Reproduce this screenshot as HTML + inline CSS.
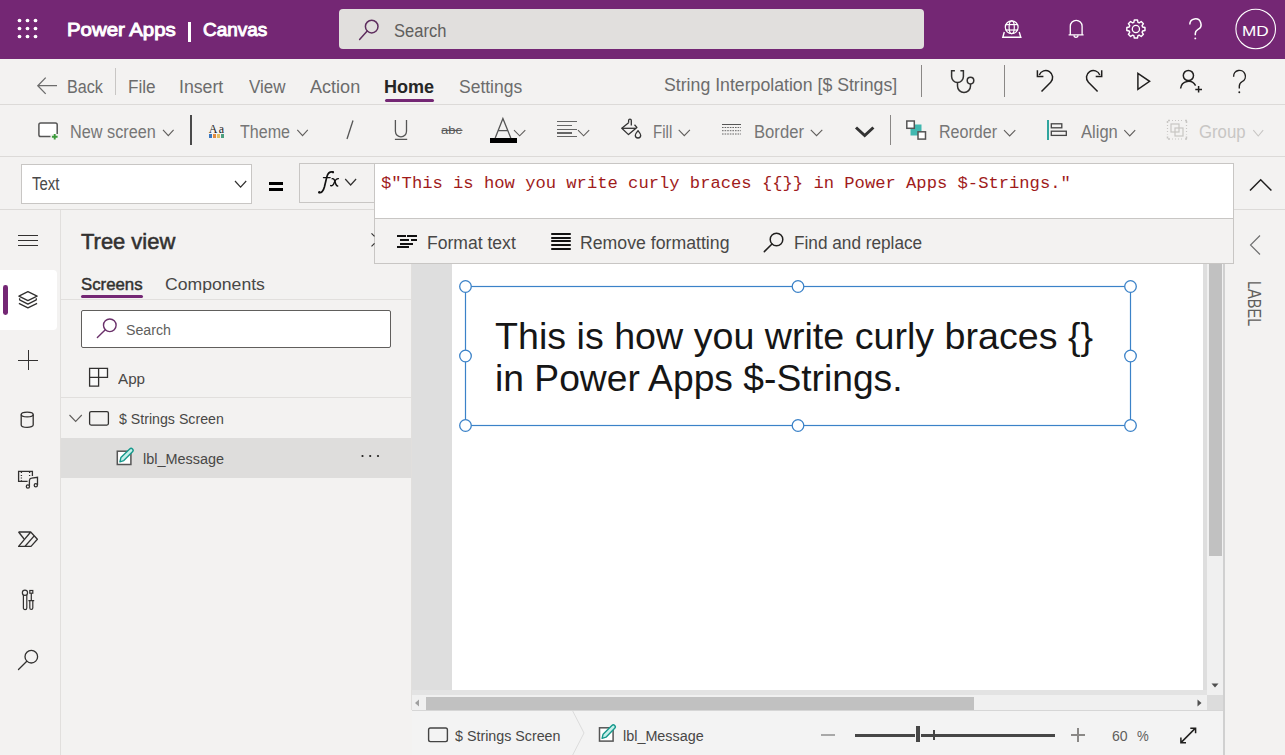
<!DOCTYPE html>
<html><head><meta charset="utf-8"><title>Power Apps</title>
<style>
html,body{margin:0;padding:0;width:1285px;height:755px;overflow:hidden;background:#f3f2f1;font-family:'Liberation Sans', sans-serif;}
</style></head><body>
<div style="position:relative;width:1285px;height:755px;overflow:hidden">
<div style="position:absolute;left:0px;top:0px;width:1285px;height:755px;background:#f3f2f1"></div>
<div style="position:absolute;left:0px;top:0px;width:1285px;height:59px;background:#742774"></div>
<div style="position:absolute;left:0px;top:104px;width:1285px;height:1px;background:#dcdad8"></div>
<div style="position:absolute;left:0px;top:156px;width:1285px;height:1px;background:#dcdad8"></div>
<div style="position:absolute;left:0px;top:209px;width:1285px;height:1px;background:#dcdad8"></div>
<div style="position:absolute;left:66.93px;top:21.00px;font-size:18.8px;line-height:18.8px;color:#fff;font-weight:normal;font-family:'Liberation Sans', sans-serif;white-space:pre;transform:scaleX(1.0846);transform-origin:0 0;-webkit-text-stroke:0.95px #fff">Power Apps</div>
<div style="position:absolute;left:188.4px;top:21.8px;width:2.4px;height:20.2px;background:#fff"></div>
<div style="position:absolute;left:202.73px;top:21.00px;font-size:18.8px;line-height:18.8px;color:#fff;font-weight:normal;font-family:'Liberation Sans', sans-serif;white-space:pre;transform:scaleX(1.0078);transform-origin:0 0;-webkit-text-stroke:0.95px #fff">Canvas</div>
<div style="position:absolute;left:339px;top:9px;width:585px;height:40px;background:#e1dfdd;border-radius:4px"></div>
<div style="position:absolute;left:393.76px;top:22.00px;font-size:18px;line-height:18px;color:#605e5c;font-weight:normal;font-family:'Liberation Sans', sans-serif;white-space:pre;transform:scaleX(0.9174);transform-origin:0 0;">Search</div>
<div style="position:absolute;left:1242.29px;top:23.00px;font-size:15.5px;line-height:15.5px;color:#fff;font-weight:normal;font-family:'Liberation Sans', sans-serif;white-space:pre;transform:scaleX(1.1092);transform-origin:0 0;">MD</div>
<div style="position:absolute;left:66.68px;top:79.00px;font-size:17.5px;line-height:17.5px;color:#6c6c6c;font-weight:normal;font-family:'Liberation Sans', sans-serif;white-space:pre;transform:scaleX(0.9230);transform-origin:0 0;">Back</div>
<div style="position:absolute;left:115px;top:68px;width:1px;height:27px;background:#c8c6c4"></div>
<div style="position:absolute;left:127.59px;top:79.00px;font-size:17.5px;line-height:17.5px;color:#6c6c6c;font-weight:normal;font-family:'Liberation Sans', sans-serif;white-space:pre;transform:scaleX(0.9812);transform-origin:0 0;">File</div>
<div style="position:absolute;left:178.87px;top:79.00px;font-size:17.5px;line-height:17.5px;color:#6c6c6c;font-weight:normal;font-family:'Liberation Sans', sans-serif;white-space:pre;transform:scaleX(1.0111);transform-origin:0 0;">Insert</div>
<div style="position:absolute;left:248.53px;top:79.00px;font-size:17.5px;line-height:17.5px;color:#6c6c6c;font-weight:normal;font-family:'Liberation Sans', sans-serif;white-space:pre;transform:scaleX(0.9683);transform-origin:0 0;">View</div>
<div style="position:absolute;left:310.46px;top:79.00px;font-size:17.5px;line-height:17.5px;color:#6c6c6c;font-weight:normal;font-family:'Liberation Sans', sans-serif;white-space:pre;transform:scaleX(1.0324);transform-origin:0 0;">Action</div>
<div style="position:absolute;left:384.29px;top:79.00px;font-size:17.5px;line-height:17.5px;color:#262626;font-weight:bold;font-family:'Liberation Sans', sans-serif;white-space:pre;transform:scaleX(1.0310);transform-origin:0 0;">Home</div>
<div style="position:absolute;left:385px;top:99px;width:49px;height:3px;background:#742774;border-radius:1.5px"></div>
<div style="position:absolute;left:458.71px;top:79.00px;font-size:17.5px;line-height:17.5px;color:#6c6c6c;font-weight:normal;font-family:'Liberation Sans', sans-serif;white-space:pre;transform:scaleX(0.9998);transform-origin:0 0;">Settings</div>
<div style="position:absolute;left:663.80px;top:77.00px;font-size:17.5px;line-height:17.5px;color:#6c6c6c;font-weight:normal;font-family:'Liberation Sans', sans-serif;white-space:pre;transform:scaleX(1.0113);transform-origin:0 0;">String Interpolation [$ Strings]</div>
<div style="position:absolute;left:921px;top:65px;width:1px;height:32px;background:#8a8886"></div>
<div style="position:absolute;left:1004px;top:65px;width:1px;height:32px;background:#8a8886"></div>
<div style="position:absolute;left:70.27px;top:124.00px;font-size:17.5px;line-height:17.5px;color:#767676;font-weight:normal;font-family:'Liberation Sans', sans-serif;white-space:pre;transform:scaleX(0.9284);transform-origin:0 0;">New screen</div>
<div style="position:absolute;left:190px;top:115px;width:2px;height:30px;background:#4a4a4a"></div>
<div style="position:absolute;left:208.80px;top:123.00px;font-size:12px;line-height:12px;color:#222;font-weight:normal;font-family:'Liberation Serif', serif;white-space:pre;letter-spacing:1.2px">Aa</div>
<div style="position:absolute;left:208.6px;top:134.3px;width:3.4px;height:3.3px;background:#3a78c0"></div>
<div style="position:absolute;left:212.7px;top:134.3px;width:3.4px;height:3.3px;background:#e08a40"></div>
<div style="position:absolute;left:216.79999999999998px;top:134.3px;width:3.4px;height:3.3px;background:#e3bd62"></div>
<div style="position:absolute;left:220.9px;top:134.3px;width:3.4px;height:3.3px;background:#4b9f7f"></div>
<div style="position:absolute;left:239.65px;top:124.00px;font-size:17.5px;line-height:17.5px;color:#767676;font-weight:normal;font-family:'Liberation Sans', sans-serif;white-space:pre;transform:scaleX(0.9192);transform-origin:0 0;">Theme</div>
<div style="position:absolute;left:441.46px;top:125.00px;font-size:11.5px;line-height:11.5px;color:#555;font-weight:normal;font-family:'Liberation Sans', sans-serif;white-space:pre;transform:scaleX(1.1264);transform-origin:0 0;">abc</div>
<div style="position:absolute;left:490px;top:138px;width:27px;height:5px;background:#000"></div>
<div style="position:absolute;left:557px;top:121.3px;width:20px;height:1.1px;background:#666"></div>
<div style="position:absolute;left:557px;top:125.02px;width:15px;height:1.1px;background:#666"></div>
<div style="position:absolute;left:557px;top:128.74px;width:20px;height:1.1px;background:#666"></div>
<div style="position:absolute;left:557px;top:132.46px;width:15px;height:1.1px;background:#666"></div>
<div style="position:absolute;left:557px;top:136.18px;width:20px;height:1.1px;background:#666"></div>
<div style="position:absolute;left:652.96px;top:124.00px;font-size:17.5px;line-height:17.5px;color:#767676;font-weight:normal;font-family:'Liberation Sans', sans-serif;white-space:pre;transform:scaleX(0.8612);transform-origin:0 0;">Fill</div>
<div style="position:absolute;left:722px;top:124px;width:19px;height:1.3px;background:#555"></div>
<div style="position:absolute;left:753.94px;top:124.00px;font-size:17.5px;line-height:17.5px;color:#767676;font-weight:normal;font-family:'Liberation Sans', sans-serif;white-space:pre;transform:scaleX(0.9507);transform-origin:0 0;">Border</div>
<div style="position:absolute;left:890px;top:115px;width:1px;height:30px;background:#8a8886"></div>
<div style="position:absolute;left:938.78px;top:124.00px;font-size:17.5px;line-height:17.5px;color:#767676;font-weight:normal;font-family:'Liberation Sans', sans-serif;white-space:pre;transform:scaleX(0.9185);transform-origin:0 0;">Reorder</div>
<div style="position:absolute;left:1047px;top:120px;width:1.6px;height:20px;background:#2fa59e"></div>
<div style="position:absolute;left:1080.57px;top:124.00px;font-size:17.5px;line-height:17.5px;color:#767676;font-weight:normal;font-family:'Liberation Sans', sans-serif;white-space:pre;transform:scaleX(0.9458);transform-origin:0 0;">Align</div>
<div style="position:absolute;left:1199.46px;top:124.00px;font-size:17.5px;line-height:17.5px;color:#c8c6c4;font-weight:normal;font-family:'Liberation Sans', sans-serif;white-space:pre;transform:scaleX(0.9570);transform-origin:0 0;">Group</div>
<div style="position:absolute;left:21px;top:164px;width:230.5px;height:40px;background:#fff;border:1px solid #c8c6c4;box-sizing:border-box"></div>
<div style="position:absolute;left:32.17px;top:176.00px;font-size:17.5px;line-height:17.5px;color:#4a4948;font-weight:normal;font-family:'Liberation Sans', sans-serif;white-space:pre;transform:scaleX(0.8579);transform-origin:0 0;">Text</div>
<div style="position:absolute;left:269px;top:182px;width:14.4px;height:2.5px;background:#000"></div>
<div style="position:absolute;left:269px;top:188px;width:14.4px;height:2.5px;background:#000"></div>
<div style="position:absolute;left:299px;top:163px;width:76px;height:40px;background:#f3f2f1;border:1px solid #c8c6c4;box-sizing:border-box"></div>
<div style="position:absolute;left:60px;top:210px;width:1px;height:545px;background:#e1dfdd"></div>
<div style="position:absolute;left:18px;top:234.6px;width:20px;height:1.2px;background:#323130"></div>
<div style="position:absolute;left:18px;top:239.9px;width:20px;height:1.2px;background:#323130"></div>
<div style="position:absolute;left:18px;top:245.20000000000002px;width:20px;height:1.2px;background:#323130"></div>
<div style="position:absolute;left:0px;top:270px;width:57px;height:60px;background:#fff;border-radius:0 4px 4px 0"></div>
<div style="position:absolute;left:3px;top:285px;width:4.8px;height:30px;background:#742774;border-radius:2.4px"></div>
<div style="position:absolute;left:18px;top:359.6px;width:20.2px;height:1.2px;background:#323130"></div>
<div style="position:absolute;left:27.5px;top:350.2px;width:1.2px;height:20.2px;background:#323130"></div>
<div style="position:absolute;left:411px;top:210px;width:1px;height:500px;background:#e1dfdd"></div>
<div style="position:absolute;left:80.92px;top:231.00px;font-size:22px;line-height:22px;color:#323130;font-weight:normal;font-family:'Liberation Sans', sans-serif;white-space:pre;transform:scaleX(0.9966);transform-origin:0 0;-webkit-text-stroke:0.55px #323130">Tree view</div>
<div style="position:absolute;left:80.64px;top:276.00px;font-size:16.5px;line-height:16.5px;color:#323130;font-weight:normal;font-family:'Liberation Sans', sans-serif;white-space:pre;transform:scaleX(1.0171);transform-origin:0 0;-webkit-text-stroke:0.45px #323130">Screens</div>
<div style="position:absolute;left:164.90px;top:276.00px;font-size:16.5px;line-height:16.5px;color:#484746;font-weight:normal;font-family:'Liberation Sans', sans-serif;white-space:pre;transform:scaleX(1.0682);transform-origin:0 0;">Components</div>
<div style="position:absolute;left:81px;top:295.4px;width:62px;height:3px;background:#742774;border-radius:1.5px"></div>
<div style="position:absolute;left:61px;top:299px;width:350px;height:1px;background:#e1dfdd"></div>
<div style="position:absolute;left:81px;top:310px;width:310px;height:38px;background:#fff;border:1px solid #605e5c;border-radius:2px;box-sizing:border-box"></div>
<div style="position:absolute;left:126.46px;top:322.00px;font-size:15.5px;line-height:15.5px;color:#605e5c;font-weight:normal;font-family:'Liberation Sans', sans-serif;white-space:pre;transform:scaleX(0.9156);transform-origin:0 0;">Search</div>
<div style="position:absolute;left:118.27px;top:371.00px;font-size:15.5px;line-height:15.5px;color:#484746;font-weight:normal;font-family:'Liberation Sans', sans-serif;white-space:pre;transform:scaleX(0.9817);transform-origin:0 0;">App</div>
<div style="position:absolute;left:61px;top:397px;width:350px;height:1px;background:#e1dfdd"></div>
<div style="position:absolute;left:118.64px;top:411.00px;font-size:15.5px;line-height:15.5px;color:#484746;font-weight:normal;font-family:'Liberation Sans', sans-serif;white-space:pre;transform:scaleX(0.9145);transform-origin:0 0;">$ Strings Screen</div>
<div style="position:absolute;left:61px;top:438px;width:350px;height:39.5px;background:#dedddc"></div>
<div style="position:absolute;left:142.53px;top:451.00px;font-size:15.5px;line-height:15.5px;color:#484746;font-weight:normal;font-family:'Liberation Sans', sans-serif;white-space:pre;transform:scaleX(0.9320);transform-origin:0 0;">lbl_Message</div>
<div style="position:absolute;left:412px;top:263px;width:811px;height:447px;background:#dedede"></div>
<div style="position:absolute;left:452px;top:263px;width:750.5px;height:427px;background:#fff"></div>
<div style="position:absolute;left:495.37px;top:318.00px;font-size:37px;line-height:37px;color:#161616;font-weight:normal;font-family:'Liberation Sans', sans-serif;white-space:pre;transform:scaleX(1.0170);transform-origin:0 0;">This is how you write curly braces {}</div>
<div style="position:absolute;left:495.31px;top:360.00px;font-size:37px;line-height:37px;color:#161616;font-weight:normal;font-family:'Liberation Sans', sans-serif;white-space:pre;transform:scaleX(1.0060);transform-origin:0 0;">in Power Apps $-Strings.</div>
<div style="position:absolute;left:412px;top:690px;width:795px;height:5px;background:#e3e3e3"></div>
<div style="position:absolute;left:1207px;top:263px;width:16px;height:432px;background:#f0f0f0"></div>
<div style="position:absolute;left:1209px;top:263px;width:13px;height:293px;background:#c1c1c1"></div>
<div style="position:absolute;left:1223px;top:210px;width:2px;height:545px;background:#d0d0d0"></div>
<div style="position:absolute;left:412px;top:695px;width:795px;height:15px;background:#f0f0f0"></div>
<div style="position:absolute;left:426px;top:697px;width:548px;height:13px;background:#c1c1c1"></div>
<div style="position:absolute;left:1207px;top:695px;width:16px;height:15px;background:#dcdcdc"></div>
<div style="position:absolute;left:412px;top:710px;width:811px;height:45px;background:#f3f3f3"></div>
<div style="position:absolute;left:412px;top:710px;width:811px;height:1px;background:#d6d6d6"></div>
<div style="position:absolute;left:455.04px;top:728.00px;font-size:15.5px;line-height:15.5px;color:#484746;font-weight:normal;font-family:'Liberation Sans', sans-serif;white-space:pre;transform:scaleX(0.9207);transform-origin:0 0;">$ Strings Screen</div>
<div style="position:absolute;left:623.34px;top:728.00px;font-size:15.5px;line-height:15.5px;color:#484746;font-weight:normal;font-family:'Liberation Sans', sans-serif;white-space:pre;transform:scaleX(0.9274);transform-origin:0 0;">lbl_Message</div>
<div style="position:absolute;left:821px;top:734px;width:14px;height:2px;background:#a8a8a8"></div>
<div style="position:absolute;left:855px;top:734px;width:200px;height:3px;background:#464646"></div>
<div style="position:absolute;left:915px;top:725px;width:6px;height:18px;background:#464646;border:1px solid #f3f3f3;box-sizing:border-box"></div>
<div style="position:absolute;left:933px;top:730px;width:2px;height:10px;background:#464646"></div>
<div style="position:absolute;left:1071px;top:734px;width:14px;height:1.5px;background:#8a8886"></div>
<div style="position:absolute;left:1077.2px;top:728px;width:1.5px;height:14px;background:#8a8886"></div>
<div style="position:absolute;left:1111.88px;top:729.00px;font-size:14.5px;line-height:14.5px;color:#605e5c;font-weight:normal;font-family:'Liberation Sans', sans-serif;white-space:pre;transform:scaleX(0.9717);transform-origin:0 0;">60</div>
<div style="position:absolute;left:1137.32px;top:729.00px;font-size:14.5px;line-height:14.5px;color:#605e5c;font-weight:normal;font-family:'Liberation Sans', sans-serif;white-space:pre;transform:scaleX(0.9105);transform-origin:0 0;">%</div>
<div style="position:absolute;left:1262.86px;top:281.10px;font-size:18.02px;line-height:18.02px;font-family:'Liberation Sans', sans-serif;color:#605e5c;white-space:pre;transform-origin:0 0;transform:rotate(90deg) scaleX(0.8088)">LABEL</div>
<div style="position:absolute;left:374px;top:163px;width:860px;height:56px;background:#fff;border:1px solid #c8c6c4;box-sizing:border-box"></div>
<div style="position:absolute;left:381.00px;top:175.00px;font-size:17.17px;line-height:17.17px;color:#a01b1b;font-weight:normal;font-family:'Liberation Mono', monospace;white-space:pre;">$"This is how you write curly braces {{}} in Power Apps $-Strings."</div>
<div style="position:absolute;left:374px;top:218px;width:860px;height:46px;background:#f3f2f1;border:1px solid #c8c6c4;box-sizing:border-box"></div>
<div style="position:absolute;left:397px;top:235.1px;width:8.699999999999989px;height:1.8px;background:#111"></div>
<div style="position:absolute;left:407px;top:235.1px;width:9.800000000000011px;height:1.8px;background:#111"></div>
<div style="position:absolute;left:400.3px;top:239px;width:9.099999999999966px;height:1.8px;background:#111"></div>
<div style="position:absolute;left:410.5px;top:239px;width:6.300000000000011px;height:1.8px;background:#111"></div>
<div style="position:absolute;left:400.3px;top:242.8px;width:12.800000000000011px;height:1.8px;background:#111"></div>
<div style="position:absolute;left:397px;top:246.4px;width:12.399999999999977px;height:1.8px;background:#111"></div>
<div style="position:absolute;left:426.96px;top:235.00px;font-size:17.5px;line-height:17.5px;color:#484746;font-weight:normal;font-family:'Liberation Sans', sans-serif;white-space:pre;transform:scaleX(1.0030);transform-origin:0 0;">Format text</div>
<div style="position:absolute;left:551px;top:233.0px;width:19.8px;height:1.9px;background:#111;border-radius:0.9px"></div>
<div style="position:absolute;left:551px;top:236.7px;width:19.8px;height:1.9px;background:#111;border-radius:0.9px"></div>
<div style="position:absolute;left:551px;top:240.2px;width:19.8px;height:1.9px;background:#111;border-radius:0.9px"></div>
<div style="position:absolute;left:551px;top:243.9px;width:19.8px;height:1.9px;background:#111;border-radius:0.9px"></div>
<div style="position:absolute;left:551px;top:248.0px;width:19.8px;height:1.9px;background:#111;border-radius:0.9px"></div>
<div style="position:absolute;left:580.35px;top:235.00px;font-size:17.5px;line-height:17.5px;color:#484746;font-weight:normal;font-family:'Liberation Sans', sans-serif;white-space:pre;transform:scaleX(1.0111);transform-origin:0 0;">Remove formatting</div>
<div style="position:absolute;left:793.89px;top:235.00px;font-size:17.5px;line-height:17.5px;color:#484746;font-weight:normal;font-family:'Liberation Sans', sans-serif;white-space:pre;transform:scaleX(0.9832);transform-origin:0 0;">Find and replace</div>
<svg width="1285" height="755" viewBox="0 0 1285 755" style="position:absolute;left:0;top:0">
<circle cx="19.5" cy="20.5" r="1.85" fill="#fff"/>
<circle cx="19.5" cy="28.5" r="1.85" fill="#fff"/>
<circle cx="19.5" cy="36.5" r="1.85" fill="#fff"/>
<circle cx="27.5" cy="20.5" r="1.85" fill="#fff"/>
<circle cx="27.5" cy="28.5" r="1.85" fill="#fff"/>
<circle cx="27.5" cy="36.5" r="1.85" fill="#fff"/>
<circle cx="35.5" cy="20.5" r="1.85" fill="#fff"/>
<circle cx="35.5" cy="28.5" r="1.85" fill="#fff"/>
<circle cx="35.5" cy="36.5" r="1.85" fill="#fff"/>
<circle cx="371.7" cy="26.6" r="6.3" fill="none" stroke="#5e2d5e" stroke-width="1.5"/>
<line x1="367.2" y1="31.1" x2="359.6" y2="39.4" stroke="#5e2d5e" stroke-width="1.5" stroke-linecap="round"/>
<g fill="none" stroke="#fff" stroke-width="1.2"><circle cx="1011.7" cy="27.3" r="6.4"/><ellipse cx="1011.7" cy="27.3" rx="2.6" ry="6.4"/><line x1="1005.6" y1="24.6" x2="1017.8" y2="24.6"/><line x1="1005.6" y1="30" x2="1017.8" y2="30"/><path d="M1004.3 32 L1002.8 37.2 H1020.8 L1019.2 32" stroke-width="1.4"/></g>
<g fill="none" stroke="#fff" stroke-width="1.3"><path d="M1068.6 34.8 H1083.6 M1070.3 34.8 V26.2 A5.9 5.9 0 0 1 1082.1 26.2 V34.8"/><path d="M1074 35.3 A2 2 0 0 0 1078 35.3"/></g>
<path d="M1144.97 27.44 L1144.97 30.56 L1142.59 31.07 L1142.09 32.27 L1143.41 34.31 L1141.21 36.51 L1139.17 35.19 L1137.97 35.69 L1137.46 38.07 L1134.34 38.07 L1133.83 35.69 L1132.63 35.19 L1130.59 36.51 L1128.39 34.31 L1129.71 32.27 L1129.21 31.07 L1126.83 30.56 L1126.83 27.44 L1129.21 26.93 L1129.71 25.73 L1128.39 23.69 L1130.59 21.49 L1132.63 22.81 L1133.83 22.31 L1134.34 19.93 L1137.46 19.93 L1137.97 22.31 L1139.17 22.81 L1141.21 21.49 L1143.41 23.69 L1142.09 25.73 L1142.59 26.93Z" fill="none" stroke="#fff" stroke-width="1.45" stroke-linejoin="round"/>
<circle cx="1135.9" cy="29" r="3.6" fill="none" stroke="#fff" stroke-width="1.3"/>
<path d="M1189.8 24.5 A5.6 5.6 0 1 1 1198 29.4 Q1195.3 31 1195.3 33.5 V35.3" fill="none" stroke="#fff" stroke-width="1.5"/>
<circle cx="1195.3" cy="38.4" r="0.95" fill="#fff"/>
<circle cx="1255.7" cy="29" r="19.8" fill="none" stroke="#fff" stroke-width="1.1"/>
<g fill="none" stroke="#6c6c6c" stroke-width="1.3"><path d="M37.8 85.7 H57 M45.7 77.6 L37.8 85.7 L45.7 93.9"/></g>
<g fill="none" stroke="#323130" stroke-width="1.5"><path d="M954.9 70.7 H951.6 V76.5 A5.9 5.9 0 0 0 963.4 76.5 V70.7 H960.4"/><path d="M957.5 82.3 V86 A6.5 6.5 0 0 0 970.5 86 V84"/><circle cx="970.5" cy="80.6" r="3.3"/></g>
<g fill="none" stroke="#201f1e" stroke-width="1.5"><path d="M1039.3 74.9 A6.9 6.9 0 1 1 1050.7 82.2 L1041.5 91.6"/><path d="M1037.4 70.2 V76.5 H1043.4"/></g>
<g fill="none" stroke="#201f1e" stroke-width="1.5"><path d="M1099.8 74.9 A6.9 6.9 0 1 0 1088.4 82.2 L1097.6 91.6"/><path d="M1101.7 70.2 V76.5 H1095.7"/></g>
<path d="M1137.9 73.4 L1149.6 81.3 L1137.9 89.3 Z" fill="none" stroke="#201f1e" stroke-width="1.5" stroke-miterlimit="10"/>
<g fill="none" stroke="#201f1e" stroke-width="1.5"><circle cx="1188.4" cy="75.5" r="5.1"/><path d="M1180.6 88.5 A8 8 0 0 1 1195.6 85.6"/><path d="M1198.6 85.9 V92.6 M1195.3 89.4 H1202"/></g>
<path d="M1233.6 76.7 A5.9 5.9 0 1 1 1242.3 81.5 Q1239.3 83.3 1239.3 86.3 V88.6" fill="none" stroke="#201f1e" stroke-width="1.4"/>
<circle cx="1239.3" cy="92.2" r="0.95" fill="#201f1e"/>
<rect x="38.9" y="123" width="18.3" height="13.6" rx="1.8" fill="#fff" stroke="#555" stroke-width="1.5"/>
<rect x="50.5" y="134" width="8" height="6" fill="#f3f2f1"/>
<path d="M54.7 133.9 V139.5 M51.9 136.7 H57.6" stroke="#3a9a3a" stroke-width="1.9"/>
<path d="M163 129.8 L168.3 135.7 L173.6 129.8" fill="none" stroke="#605e5c" stroke-width="1.1"/>
<path d="M297.3 129.8 L302.55 135.7 L307.8 129.8" fill="none" stroke="#605e5c" stroke-width="1.1"/>
<line x1="353" y1="120.5" x2="347" y2="139" stroke="#555" stroke-width="1.3"/>
<path d="M395.4 120 V131.3 A5.55 5.55 0 0 0 406.5 131.3 V120 M394.9 139.3 H407.2" fill="none" stroke="#555" stroke-width="1.3"/>
<line x1="441.5" y1="130.4" x2="462.5" y2="130.4" stroke="#555" stroke-width="1.1"/>
<path d="M495.2 138 L502.9 118.6 L510.8 138 M497.7 130.7 H508.3" fill="none" stroke="#555" stroke-width="1.3"/>
<path d="M514 130.2 L519.65 135.8 L525.3 130.2" fill="none" stroke="#605e5c" stroke-width="1.1"/>
<path d="M578 130.2 L583.6 135.8 L589.2 130.2" fill="none" stroke="#605e5c" stroke-width="1.1"/>
<g fill="none" stroke="#333" stroke-width="1.3" stroke-linejoin="round"><path d="M628.6 122.8 L621.8 128.3 L628.5 134.6 L636.9 127.4 L634.5 124.8"/><path d="M628.6 122.8 V120.4 A1.35 1.35 0 0 1 631.3 120.4 V125.4"/><path d="M621.8 128.3 H635.8"/><path d="M638 130.6 Q640.7 133.8 640.7 135.3 A2.7 2.7 0 0 1 635.3 135.3 Q635.3 133.8 638 130.6 Z"/></g>
<path d="M678.7 129.8 L684.3 135.7 L689.9 129.8" fill="none" stroke="#605e5c" stroke-width="1.1"/>
<line x1="722" y1="127.5" x2="741" y2="127.5" stroke="#666" stroke-width="1" stroke-dasharray="1.6 1"/>
<line x1="722" y1="130.7" x2="741" y2="130.7" stroke="#666" stroke-width="1" stroke-dasharray="1.6 1"/>
<line x1="722" y1="134" x2="741" y2="134" stroke="#666" stroke-width="1" stroke-dasharray="1.6 1"/>
<path d="M810.8 129.8 L816.55 135.7 L822.3 129.8" fill="none" stroke="#605e5c" stroke-width="1.1"/>
<path d="M856 127.5 L864.7 135.5 L873.4 127.5" fill="none" stroke="#333" stroke-width="3"/>
<rect x="910.5" y="124.5" width="11" height="11" fill="#41b8b0"/>
<rect x="906.8" y="121" width="7.5" height="7.3" fill="#fff" stroke="#555" stroke-width="1.5"/>
<rect x="918" y="131.8" width="7.5" height="7.3" fill="#fff" stroke="#555" stroke-width="1.5"/>
<path d="M1004 130.2 L1009.65 136 L1015.3 130.2" fill="none" stroke="#605e5c" stroke-width="1.1"/>
<rect x="1051.3" y="123.8" width="10.5" height="4" fill="none" stroke="#444" stroke-width="1.3"/>
<rect x="1051.3" y="131.2" width="15" height="4.2" fill="none" stroke="#444" stroke-width="1.3"/>
<path d="M1124.3 130.2 L1129.75 136 L1135.2 130.2" fill="none" stroke="#605e5c" stroke-width="1.1"/>
<g fill="none" stroke="#c8c6c4" stroke-width="1.2"><rect x="1171" y="124" width="8" height="8"/><rect x="1175" y="128" width="8" height="8"/><path d="M1168 120.5 h2 M1185 120.5 h2 M1168 139 h2 M1185 139 h2 M1167.5 121 v2 M1167.5 136.5 v2 M1186.5 121 v2 M1186.5 136.5 v2" stroke-width="1.5"/><path d="M1172 120.5 H1183 M1172 139 H1183 M1167.5 125 V134.5 M1186.5 125 V134.5" stroke-dasharray="1 2"/></g>
<path d="M1253.3 130.2 L1258.25 136 L1263.2 130.2" fill="none" stroke="#c8c6c4" stroke-width="1.1"/>
<path d="M235 181 L240.6 187.2 L246.2 181" fill="none" stroke="#323130" stroke-width="1.2"/>
<g fill="none" stroke="#111" stroke-linecap="round"><path d="M319 192.6 Q322.6 193.6 324.4 187 L326.9 176.6 Q328.4 171.1 332.9 171.9" stroke-width="1.7"/><circle cx="319.3" cy="192.2" r="1.1" fill="#111" stroke="none"/><circle cx="333" cy="172.3" r="1.1" fill="#111" stroke="none"/><path d="M323.4 177.6 H330.2" stroke-width="1.2"/><path d="M330.7 185.6 Q332.7 186.6 334.3 182.4 Q336 178.4 338.4 178.6" stroke-width="1.4"/><path d="M332.2 178.7 Q334.1 178.1 335.2 182.2 Q336.3 186.2 337.7 186" stroke-width="1.4"/></g>
<path d="M345.2 179 L350.65 185 L356.1 179" fill="none" stroke="#323130" stroke-width="1.2"/>
<circle cx="776.5" cy="239.5" r="6.3" fill="none" stroke="#201f1e" stroke-width="1.5"/>
<line x1="772" y1="244" x2="764.3" y2="251.6" stroke="#201f1e" stroke-width="1.5" stroke-linecap="round"/>
<path d="M1250 190.5 L1260.7 179.8 L1271.4 190.5" fill="none" stroke="#201f1e" stroke-width="1.5"/>
<g fill="none" stroke="#323130" stroke-width="1.3" stroke-linejoin="round"><path d="M27.9 291.7 L37.1 296.2 L27.9 300.7 L18.9 296.2 Z"/><path d="M19.6 298.2 V299.8 L27.9 304.1 L36.3 299.8 V298.2"/><path d="M18.9 303.3 L27.9 307.8 L37.1 303.3"/></g>
<g fill="none" stroke="#323130" stroke-width="1.3"><ellipse cx="27.2" cy="414.5" rx="6" ry="2.4"/><path d="M21.2 414.5 V425 A6 2.4 0 0 0 33.2 425 V414.5"/></g>
<g fill="none" stroke="#323130" stroke-width="1.3"><path d="M32.4 476 V471.4 H18.6 V481.4 H27.6"/><path d="M21.4 472 v1 M21.4 475 v1 M21.4 477.6 v1 M21.4 480.2 v1 M29.6 472 v1 M29.6 475 v1"/><path d="M29.4 485.8 V480.5 Q29.6 478.3 31.6 478.1 L37.5 477.3 V485"/><circle cx="27.9" cy="486.5" r="1.6"/><circle cx="35.8" cy="485.3" r="1.6"/></g>
<g fill="none" stroke="#323130" stroke-width="1.3" stroke-linejoin="round"><path d="M18.6 532 H30.7 L37.4 539.3 L31 546.4 H18.6 L30.7 532"/><path d="M18.6 532 L24.1 539"/><path d="M34.2 535.9 L25.1 546.3"/></g>
<g fill="none" stroke="#323130" stroke-width="1.2"><circle cx="24.95" cy="592.7" r="2.6"/><path d="M23.4 595.1 V607.9 A1.7 1.7 0 0 0 26.8 607.9 V595.1"/><rect x="29.8" y="590.5" width="3" height="2.7"/><path d="M31.3 593.2 V600.5 M28.4 600.6 H34.2 M29.8 600.6 V607.9 A1.5 1.5 0 0 0 32.8 607.9 V600.6"/></g>
<circle cx="31.3" cy="656.7" r="6.3" fill="none" stroke="#323130" stroke-width="1.3"/>
<line x1="26.8" y1="661.2" x2="18.5" y2="669.5" stroke="#323130" stroke-width="1.3" stroke-linecap="round"/>
<path d="M371.5 233.3 L374.5 236.3 M371.5 246.3 L374.5 243.3" stroke="#323130" stroke-width="1.2"/>
<circle cx="109.8" cy="325.3" r="6.3" fill="none" stroke="#6a306a" stroke-width="1.4"/>
<line x1="105.3" y1="329.8" x2="97.4" y2="337.6" stroke="#6a306a" stroke-width="1.4" stroke-linecap="round"/>
<g fill="#fafafa" stroke="#323130" stroke-width="1.3"><path d="M89.6 368.3 H107.5 V377.3 H98.6 V386.2 H89.6 Z"/><path d="M89.6 377.3 H98.6 V368.3" fill="none"/></g>
<path d="M69.5 415 L75.65 421.4 L81.8 415" fill="none" stroke="#605e5c" stroke-width="1.1"/>
<rect x="89.6" y="411.6" width="18.8" height="13.5" rx="1.5" fill="none" stroke="#323130" stroke-width="1.3"/>
<rect x="117.3" y="451.2" width="13.6" height="13.3" fill="#fff" stroke="#555" stroke-width="1.5"/><path d="M119.9 461.8 L120.9 457.6 L129.7 448.9 A1.9 1.9 0 0 1 132.5 451.7 L123.8 460.6 Z" fill="#c6efea" stroke="#16998c" stroke-width="1.4" stroke-linejoin="round"/>
<circle cx="362.5" cy="456" r="1.1" fill="#201f1e"/>
<circle cx="370.2" cy="456" r="1.1" fill="#201f1e"/>
<circle cx="378" cy="456" r="1.1" fill="#201f1e"/>
<rect x="465.5" y="286.5" width="665" height="139" fill="none" stroke="#3b82c8" stroke-width="1.2"/>
<circle cx="465.5" cy="286.5" r="5.8" fill="#fff" stroke="#3b82c8" stroke-width="1.3"/>
<circle cx="798" cy="286.5" r="5.8" fill="#fff" stroke="#3b82c8" stroke-width="1.3"/>
<circle cx="1130.5" cy="286.5" r="5.8" fill="#fff" stroke="#3b82c8" stroke-width="1.3"/>
<circle cx="465.5" cy="356" r="5.8" fill="#fff" stroke="#3b82c8" stroke-width="1.3"/>
<circle cx="1130.5" cy="356" r="5.8" fill="#fff" stroke="#3b82c8" stroke-width="1.3"/>
<circle cx="465.5" cy="425.5" r="5.8" fill="#fff" stroke="#3b82c8" stroke-width="1.3"/>
<circle cx="798" cy="425.5" r="5.8" fill="#fff" stroke="#3b82c8" stroke-width="1.3"/>
<circle cx="1130.5" cy="425.5" r="5.8" fill="#fff" stroke="#3b82c8" stroke-width="1.3"/>
<path d="M1211.5 683.5 H1218.5 L1215 687.5 Z" fill="#505050"/>
<path d="M419 699.5 V706.5 L415 703 Z" fill="#a0a0a0"/>
<path d="M1197.5 699.5 V706.5 L1201.5 703 Z" fill="#505050"/>
<rect x="428.6" y="728" width="18.8" height="13.6" rx="1.8" fill="none" stroke="#444" stroke-width="1.4"/>
<path d="M572.7 711 L584 733 L572.7 755" fill="none" stroke="#dcdcdc" stroke-width="1"/>
<g transform="translate(482.2 276.6)"><rect x="117.3" y="451.2" width="13.6" height="13.3" fill="#fff" stroke="#555" stroke-width="1.5"/><path d="M119.9 461.8 L120.9 457.6 L129.7 448.9 A1.9 1.9 0 0 1 132.5 451.7 L123.8 460.6 Z" fill="#c6efea" stroke="#16998c" stroke-width="1.4" stroke-linejoin="round"/></g>
<g fill="none" stroke="#201f1e" stroke-width="1.5"><path d="M1181 742.6 L1195.2 728.4 M1190.3 728.3 H1195.6 V733.3 M1180.9 737.4 V742.7 H1186"/></g>
<path d="M1260 235.5 L1250.5 245 L1260 254.5" fill="none" stroke="#6e6e6e" stroke-width="1.1"/>
</svg>
</div>
</body></html>
